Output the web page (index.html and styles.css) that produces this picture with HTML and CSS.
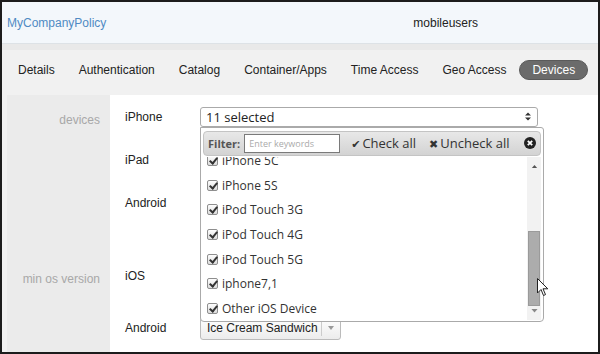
FILE: index.html
```html
<!DOCTYPE html>
<html lang="en">
<head>
    <meta charset="UTF-8">
    <title>MyCompanyPolicy - Devices</title>
    <link rel="stylesheet" href="styles.css">
</head>
<body>

<div class="frame">
    <!-- Top header -->
    <div class="header">
        <span class="brand">MyCompanyPolicy</span>
        <span class="user">mobileusers</span>
    </div>

    <!-- Tabs -->
    <div class="tabs">
        <span class="tab">Details</span>
        <span class="tab">Authentication</span>
        <span class="tab">Catalog</span>
        <span class="tab">Container/Apps</span>
        <span class="tab">Time Access</span>
        <span class="tab">Geo Access</span>
        <span class="tab active">Devices</span>
    </div>

    <!-- Form body -->
    <div class="content">
        <div class="section-label first">devices</div>
        <div class="section first">
            <div class="field-row">
                <span class="field-name">iPhone</span>
                <div class="control">
                    <div class="select">
                        <span>11 selected</span>
                        <svg class="updown" width="6" height="9" viewBox="0 0 6 9"><path d="M0 3.5 L3 0.5 L6 3.5 Z M0 5.5 L3 8.5 L6 5.5 Z" fill="#333"/></svg>
                    </div>

                    <!-- Open multiselect menu -->
                    <div class="menu">
                        <div class="menu-head">
                            <span class="filter-label">Filter:</span>
                            <span class="filter-input">Enter keywords</span>
                            <span class="menu-link"><span class="glyph">&#10004;</span>Check all</span>
                            <span class="menu-link"><span class="glyph">&#10006;</span>Uncheck all</span>
                            <svg class="menu-close" width="12" height="12" viewBox="0 0 12 12">
                                <circle cx="6" cy="6" r="6" fill="#222"/>
                                <path d="M3.8 3.8 L8.2 8.2 M8.2 3.8 L3.8 8.2" stroke="#fff" stroke-width="1.8"/>
                            </svg>
                        </div>
                        <div class="menu-body">
                            <div class="menu-list">
                                <div class="item"><span class="check"></span>iPhone 5C</div>
                                <div class="item"><span class="check"></span>iPhone 5S</div>
                                <div class="item"><span class="check"></span>iPod Touch 3G</div>
                                <div class="item"><span class="check"></span>iPod Touch 4G</div>
                                <div class="item"><span class="check"></span>iPod Touch 5G</div>
                                <div class="item"><span class="check"></span>iphone7,1</div>
                                <div class="item"><span class="check"></span>Other iOS Device</div>
                            </div>
                            <div class="scrollbar">
                                <svg width="7" height="4" viewBox="0 0 7 4"><path d="M0 4 L3.5 0 L7 4 Z" fill="#555"/></svg>
                                <div class="track"><div class="thumb"></div></div>
                                <svg width="7" height="4" viewBox="0 0 7 4"><path d="M0 0 L3.5 4 L7 0 Z" fill="#888"/></svg>
                            </div>
                        </div>
                    </div>
                </div>
            </div>
            <div class="field-row">
                <span class="field-name">iPad</span>
            </div>
            <div class="field-row">
                <span class="field-name">Android</span>
            </div>
        </div>

        <div class="section-label">min os version</div>
        <div class="section">
            <div class="field-row">
                <span class="field-name">iOS</span>
            </div>
            <div class="field-row last">
                <span class="field-name">Android</span>
                <div class="combo">
                    <span class="combo-text">Ice Cream Sandwich</span>
                    <span class="combo-arrow">
                        <svg width="6" height="4" viewBox="0 0 6 4"><path d="M0 0 L3 4 L6 0 Z" fill="#999"/></svg>
                    </span>
                </div>
            </div>
        </div>
    </div>

    <!-- Mouse pointer -->
    <svg class="cursor" width="12" height="19" viewBox="0 0 12 19">
        <path d="M0.5 0.5 L0.5 15 L4 11.5 L6.5 17.5 L8.5 16.6 L6 10.8 L10.8 10.8 Z" fill="#fff" stroke="#222" stroke-width="1"/>
    </svg>
</div>

</body>
</html>
```

FILE: styles.css
```css
/* Page frame */
body {
    margin: 0;
    background-color: #fff;
    font-family: "Liberation Sans", Arial, sans-serif;
}

.frame {
    position: relative;
    width: 600px;
    height: 354px;
    box-sizing: border-box;
    border: 2px solid #1c1c1c;
    display: flex;
    flex-direction: column;
    overflow: hidden;
    background-color: #f1f1f1;
}

/* Header */
.header {
    height: 41px;
    flex-shrink: 0;
    display: flex;
    align-items: center;
    justify-content: space-between;
    padding: 0 120px 0 5px;
    background-color: #f3f7fb;
    border-bottom: 1px solid #dde2e6;
    font-size: 12px;
}

.brand {
    color: #4f8ac3;
}

.user {
    color: #222;
}

/* Tabs */
.tabs {
    height: 51px;
    flex-shrink: 0;
    display: flex;
    align-items: center;
    padding-left: 4px;
    font-size: 12px;
    color: #222;
    box-shadow: inset 0 6px 0 #e9e9e9;
}

.tab {
    padding: 0 12px;
    line-height: 20px;
}

.tab.active {
    margin-left: 1px;
    background-color: #6b6b6b;
    color: #fff;
    border-radius: 10px;
    border: 1px solid #5a5a5a;
    line-height: 18px;
}

/* Form */
.content {
    flex: 1;
    display: grid;
    grid-template-columns: 103px 1fr;
    grid-template-rows: auto 1fr;
    margin-left: 5px;
}

.section-label {
    background-color: #ebebeb;
    color: #a8a8a8;
    font-size: 12px;
    text-align: right;
    padding: 18px 10px 0 0;
    line-height: 14px;
}

.section {
    background-color: #fff;
    padding-left: 15px;
}

.section.first {
    padding-bottom: 30px;
}

.field-row {
    display: flex;
    align-items: center;
    height: 43px;
    font-size: 12px;
    color: #222;
}

.field-row.last {
    margin-top: 9px;
}

.field-name {
    width: 75px;
    flex-shrink: 0;
}

.control {
    position: relative;
}

/* Multiselect button */
.select {
    width: 338px;
    height: 20px;
    box-sizing: border-box;
    border: 1px solid #aaa;
    border-radius: 3px;
    display: flex;
    align-items: center;
    justify-content: space-between;
    padding: 0 6px 0 5px;
    font-family: "Open Sans", sans-serif;
    font-size: 13px;
    color: #222;
    background-color: #fff;
}

/* Open menu */
.menu {
    position: absolute;
    top: 20px;
    left: 0;
    width: 344px;
    height: 195px;
    box-sizing: border-box;
    border: 1px solid #aaa;
    border-radius: 0 3px 4px 4px;
    background-color: #fff;
    padding: 3px 2px 2px 2px;
    z-index: 2;
    font-family: "Open Sans", sans-serif;
}

.menu-head {
    height: 25px;
    box-sizing: border-box;
    display: flex;
    align-items: center;
    padding: 0 4px;
    border: 1px solid #c4c4c4;
    border-radius: 4px;
    background: linear-gradient(#e8e8e8, #d3d3d3);
    color: #333;
}

.filter-label {
    font-size: 11px;
    font-weight: bold;
    color: #555;
    margin-right: 4px;
}

.filter-input {
    width: 96px;
    height: 19px;
    box-sizing: border-box;
    border: 1px solid #7a7a7a;
    background-color: #fff;
    font-size: 9px;
    color: #aaa;
    padding-left: 4px;
    line-height: 17px;
}

.menu-link {
    font-size: 13px;
    margin-left: 11px;
    color: #333;
}

.menu-link + .menu-link {
    margin-left: 13px;
}

.glyph {
    font-family: "DejaVu Sans", sans-serif;
    font-size: 11px;
    margin-right: 2px;
}

.menu-close {
    margin-left: auto;
}

.menu-body {
    display: flex;
    height: 163px;
    margin-top: 1px;
}

.menu-list {
    flex: 1;
    overflow: hidden;
}

.item {
    height: 24.7px;
    display: flex;
    align-items: center;
    padding-left: 4px;
    font-size: 12px;
    color: #333;
}

.item:first-child {
    margin-top: -8.4px;
}

.check {
    width: 11px;
    height: 11px;
    box-sizing: border-box;
    border: 1px solid #8e8e8e;
    border-radius: 2px;
    background: linear-gradient(#fdfdfd, #dcdcdc);
    margin-right: 4px;
    position: relative;
}

.check::after {
    content: "";
    position: absolute;
    left: 3px;
    top: 0;
    width: 3px;
    height: 6px;
    border: solid #333;
    border-width: 0 2px 2px 0;
    transform: rotate(40deg);
}

/* Scrollbar */
.scrollbar {
    width: 14px;
    display: flex;
    flex-direction: column;
    align-items: center;
    background-color: #f2f2f2;
    padding: 8px 0 7px;
    box-sizing: border-box;
}

.track {
    flex: 1;
    width: 100%;
    padding: 0 1px;
    box-sizing: border-box;
    margin: 3px 0;
}

.thumb {
    margin-top: 60px;
    height: 75px;
    background-color: #acacac;
    border: 1px solid #9a9a9a;
    box-sizing: border-box;
}

/* Ice Cream Sandwich select */
.combo {
    width: 141px;
    height: 24px;
    box-sizing: border-box;
    border: 1px solid #bbb;
    border-radius: 3px;
    background: linear-gradient(#fff, #ececec);
    display: flex;
    align-items: center;
    margin-top: 1px;
}

.combo-text {
    flex: 1;
    padding-left: 6px;
    font-size: 12px;
    color: #222;
}

.combo-arrow {
    width: 18px;
    height: 16px;
    border-left: 1px solid #ccc;
    display: flex;
    align-items: center;
    justify-content: center;
}

/* Pointer */
.cursor {
    position: absolute;
    left: 535px;
    top: 276px;
    z-index: 3;
}
```
